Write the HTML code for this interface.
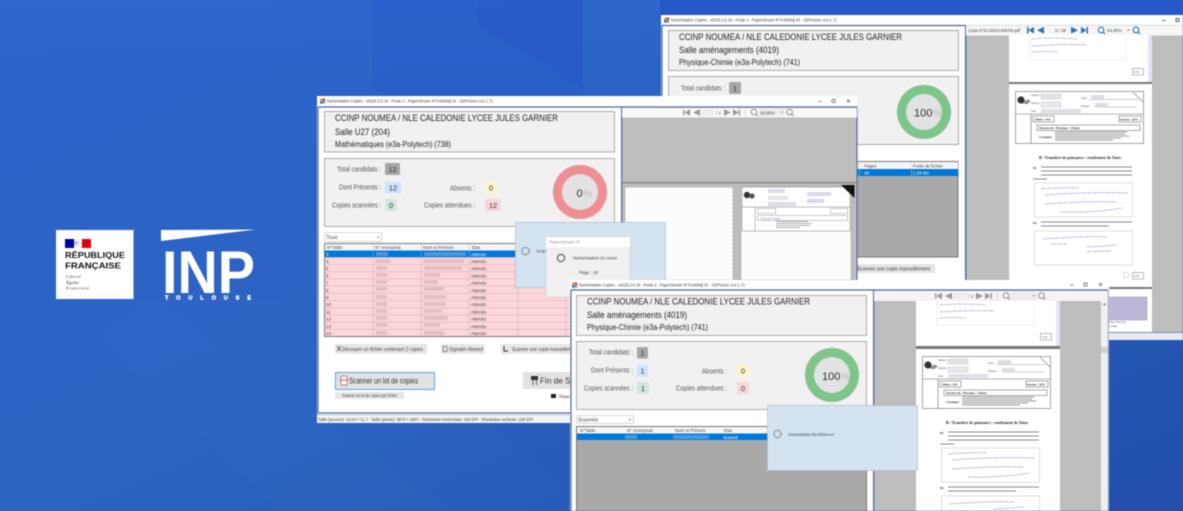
<!DOCTYPE html>
<html lang="fr"><head><meta charset="utf-8"><title>Numérisation Copies</title>
<style>
html,body{margin:0;padding:0;width:1183px;height:511px;overflow:hidden;background:#2b62c4}
svg{position:absolute;left:0;top:0;display:block}
#ui{filter:blur(.45px)}
text{font-family:"Liberation Sans",sans-serif;fill:#222}
.ti{font-size:4.6px;fill:#444}
.h1{font-size:9px;fill:#222}.h2{font-size:9px;fill:#222}.h3{font-size:8px;fill:#222}
.lb{font-size:7.2px;fill:#555;text-anchor:end}
.bd{font-size:7.5px;fill:#333;text-anchor:middle}
.sm{font-size:4.4px;fill:#444}
.btn{font-size:5px;fill:#444}
.doc{font-size:2.6px;fill:#555;font-family:"Liberation Serif",serif}
.dl{font-size:3px;fill:#333;font-family:"Liberation Serif",serif}
.hw{fill:none;stroke:#8a88d0;stroke-width:1;stroke-dasharray:3 .7 1.6 .8;opacity:.65}
</style></head><body>
<svg width="1183" height="511" viewBox="0 0 1183 511">
<defs>
<linearGradient id="bg" x1="0" y1="0" x2="1" y2="1"><stop offset="0" stop-color="#2c64cc"/><stop offset=".45" stop-color="#2c63c3"/><stop offset="1" stop-color="#214fab"/></linearGradient>
<linearGradient id="bg2" x1="0" y1="0" x2="0" y2="1"><stop offset="0" stop-color="#3d7ae0" stop-opacity=".14"/><stop offset=".5" stop-color="#2a60c0" stop-opacity="0"/></linearGradient>
</defs>
<rect width="1183" height="511" fill="url(#bg)"/>
<rect width="660" height="230" fill="url(#bg2)"/>
<polygon points="0,400 150,300 340,300 600,511 0,511" fill="#3a78cc" opacity=".1"/>
<polygon points="60,300 160,300 450,511 280,511" fill="#4182d0" opacity=".07"/>
<polygon points="372,0 583,0 583,88 480,150 372,88" fill="#2757c9" opacity=".4"/>
<polygon points="478,0 583,0 583,88 478,26" fill="#2350c6" opacity=".3"/>
<polygon points="660,0 1183,0 1183,18 660,18" fill="#2658c9"/>
</svg>

<svg id="ui" width="1183" height="511" viewBox="0 0 1183 511">
<defs>
<pattern id="grid" width="4" height="4" patternUnits="userSpaceOnUse"><rect width="4" height="4" fill="#fff"/><path d="M0 0H4M0 0V4" stroke="#e7e7e7" stroke-width=".6"/></pattern>
<g id="nav">
<rect x="0" y="-3" width="1.4" height="6" fill="#999"/><polygon points="7,-3.4 7,3.4 1.6,0" fill="#999"/>
<polygon points="17,-3.4 17,3.4 10,0" fill="#999"/>
<rect x="18" y="-3.6" width="13" height="7.2" fill="#eee"/>
<polygon points="41,-3.4 41,3.4 48,0" fill="#999"/>
<polygon points="50,-3.4 50,3.4 55.6,0" fill="#999"/><rect x="55.6" y="-3" width="1.4" height="6" fill="#999"/>
<rect x="62" y="-4" width=".7" height="8" fill="#ccc"/>
<circle cx="71" cy="-.5" r="2.8" fill="none" stroke="#999" stroke-width="1.1"/><path d="M73 1.6L75 3.6" stroke="#999" stroke-width="1.2"/>
<rect x="77" y="-3.4" width="24" height="6.8" fill="#eee" stroke="#ddd" stroke-width=".5"/><polygon points="97.5,-.7 100,-.7 98.7,.8" fill="#888"/>
<circle cx="106.5" cy="-.5" r="2.8" fill="none" stroke="#999" stroke-width="1.1"/><path d="M108.5 1.6L110.5 3.6" stroke="#999" stroke-width="1.2"/>
</g>
<g id="ctl" fill="none" stroke="#555" stroke-width=".7"><path d="M0 .5H3.5"/><rect x="14" y="-1.5" width="3" height="3"/><path d="M29 -1.5L32 1.5M32 -1.5L29 1.5"/></g>
<g id="spin" fill="none" stroke="#777" stroke-width="1.5"><circle r="3.6" stroke-dasharray="1.2 .9"/></g>
<g id="appicon"><rect x="0" y="0" width="2.6" height="2.6" fill="#e8a23a"/><rect x="2.6" y="0" width="2.6" height="2.6" fill="#c94a3f"/><rect x="0" y="2.6" width="2.6" height="2.6" fill="#3a6fc9"/><rect x="2.6" y="2.6" width="2.6" height="2.6" fill="#8a9ab8"/></g>
</defs>

<!-- LOGOS -->
<rect x="56" y="230" width="77.5" height="69" fill="#fff"/>
<rect x="65" y="239" width="9" height="9" fill="#000091"/><rect x="74" y="239" width="8" height="9" fill="#f2f2f5"/><rect x="82" y="239" width="9" height="9" fill="#e1000f"/>
<circle cx="76" cy="243" r="2" fill="#b8bcd8"/>
<text x="65" y="258" font-size="8.2" font-weight="700" textLength="60" lengthAdjust="spacingAndGlyphs" style="fill:#161616">RÉPUBLIQUE</text>
<text x="65" y="268.5" font-size="8.2" font-weight="700" textLength="56" lengthAdjust="spacingAndGlyphs" style="fill:#161616">FRANÇAISE</text>
<g font-style="italic" font-size="4.6">
<text x="66" y="278" style="font-family:'Liberation Serif',serif;fill:#333" textLength="15">Liberté</text>
<text x="66" y="284" style="font-family:'Liberation Serif',serif;fill:#333" textLength="13">Égalité</text>
<text x="66" y="289.5" style="font-family:'Liberation Serif',serif;fill:#333" textLength="23">Fraternité</text>
</g>
<polygon points="161,230 256,229.5 161,241" fill="#fff"/>
<text x="162" y="293" font-size="60" font-weight="700" textLength="93" lengthAdjust="spacingAndGlyphs" style="fill:#fff">INP</text>
<text x="165" y="299.5" font-size="5.6" font-weight="700" textLength="86" style="fill:#fff;stroke:#fff;stroke-width:.4">TOULOUSE</text>

<!-- BACK WINDOW -->
<rect x="661" y="15" width="522" height="318" fill="#fff"/>
<use href="#appicon" x="664" y="17.5"/>
<text class="ti" x="671" y="21.5" textLength="166" lengthAdjust="spacingAndGlyphs">Numérisation Copies - v2025.2.0.18 - Poste 2 - PaperStream IP fi-6400dj #2 - GDPicture v14.1.71</text>
<use href="#ctl" x="1162" y="20"/>
<rect x="661" y="25" width="304" height="308" fill="#fff"/>
<path d="M662 25V333M662 25.5H965" stroke="#4b6a9e" stroke-width="1.2" fill="none"/>
<rect x="668.5" y="30.5" width="290" height="40" fill="#f1f1f1" stroke="#aaa"/>
<text class="h1" x="679" y="40" textLength="223" lengthAdjust="spacingAndGlyphs">CCINP NOUMEA / NLE CALEDONIE LYCEE JULES GARNIER</text>
<text class="h2" x="679" y="53" textLength="100" lengthAdjust="spacingAndGlyphs">Salle aménagements (4019)</text>
<text class="h3" x="679" y="65" textLength="121" lengthAdjust="spacingAndGlyphs">Physique-Chimie (e3a-Polytech) (741)</text>
<rect x="668.5" y="76.5" width="290" height="68" fill="#f1f1f1" stroke="#aaa"/>
<text class="lb" x="725" y="90.5" textLength="44" lengthAdjust="spacingAndGlyphs">Total candidats :</text>
<rect x="729" y="82" width="12" height="12" rx="1.5" fill="#a6a6a6"/><text class="bd" x="735" y="91">1</text>
<circle cx="924" cy="112" r="27" fill="#7dc58a"/><circle cx="924" cy="112" r="18" fill="#e2e2e2"/>
<text x="914" y="116.5" font-size="11" style="fill:#333">100</text><text x="933" y="116.5" font-size="10" style="fill:#bbb">%</text>
<rect x="668" y="161.5" width="290" height="95.5" fill="#a9a9a9" stroke="#777"/>
<rect x="669" y="162" width="289" height="7" fill="#f5f5f5"/>
<text class="sm" x="864" y="167.5">Pages</text><text class="sm" x="913" y="167.5">Poids du fichier</text>
<rect x="669" y="169" width="289" height="7" fill="#0078d7"/>
<text class="sm" x="864" y="174.5" style="fill:#fff">28</text><text class="sm" x="913" y="174.5" style="fill:#fff">1,29 Mo</text>
<path d="M859.5 162V176M911.5 162V176" stroke="#ccc" stroke-width=".5"/>
<rect x="800" y="264" width="135" height="9" fill="#e4e4e4"/>
<text class="btn" x="857" y="270.5" textLength="73" lengthAdjust="spacingAndGlyphs">Scanner une copie manuellement</text>

<rect x="965" y="25" width="218" height="308" fill="#bdbdbd"/>
<rect x="965" y="25" width="1.4" height="308" fill="#4b6a9e"/>
<rect x="966" y="25.5" width="217" height="10" fill="#f6f6f6"/>
<text class="sm" x="968" y="32" textLength="52" lengthAdjust="spacingAndGlyphs">Copie-0741-00015-659794.pdf</text>
<g fill="#2f72ad">
<rect x="1027" y="27" width="1.6" height="6.4"/><polygon points="1034,26.8 1034,33.6 1028.6,30.2"/><polygon points="1044,26.8 1044,33.6 1037,30.2"/>
<polygon points="1071,26.8 1071,33.6 1078,30.2"/><polygon points="1081,26.8 1081,33.6 1086.4,30.2"/><rect x="1086.4" y="27" width="1.6" height="6.4"/>
</g>
<text class="sm" x="1055" y="32.2">5 / 28</text>
<circle cx="1101" cy="30" r="2.8" fill="none" stroke="#2f72ad" stroke-width="1.1"/><path d="M1103 32L1105 34" stroke="#2f72ad" stroke-width="1.2"/>
<text class="sm" x="1107" y="32">54,00%</text><polygon points="1127,29.6 1129.6,29.6 1128.3,31" fill="#555"/>
<circle cx="1136" cy="30" r="2.8" fill="none" stroke="#2f72ad" stroke-width="1.1"/><path d="M1138 32L1140 34" stroke="#2f72ad" stroke-width="1.2"/>
<use href="#ctl" x="1162" y="20"/>
<rect x="1009" y="35" width="143" height="47" fill="#fff"/><rect x="1148" y="35" width="4" height="47" fill="#e3e3f3"/>
<path d="M1030 35V60H1126V35" fill="none" stroke="#ddd" stroke-width=".6"/>
<path class="hw" d="M1032 39q20 -2 45 0M1032 46q30 -2 55 -1M1032 52q15 -1 26 0"/>
<rect x="1132.5" y="68.5" width="11" height="6.5" fill="#fff" stroke="#777" stroke-width=".5"/><text class="doc" x="1134" y="73" style="font-size:3px">4/20</text>
<rect x="1009" y="82" width="143" height="2" fill="#777"/>
<rect x="1009" y="287" width="143" height="2" fill="#777"/>
<rect x="1009" y="289" width="143" height="44" fill="#fff"/>
<rect x="1019" y="297" width="128" height="23" fill="#b9b6d8" stroke="#999" stroke-width=".5"/>
<text class="doc" x="1109" y="323">Etant donné que</text><text class="doc" x="1109" y="327">la figure</text>

<g transform="translate(1009,84)">
<rect width="143" height="203" fill="#fff"/>
<rect x="6.5" y="7.5" width="128" height="52" fill="#fff" stroke="#666" stroke-width=".6"/>
<path d="M6.5 30H134.5M22 30V59.5" stroke="#666" stroke-width=".6"/>
<circle cx="12" cy="16" r="3.6" fill="#333"/><text x="14" y="20" font-size="5" font-weight="700" style="fill:#333">NP</text>
<rect x="32" y="10" width="20" height="5" fill="#e2e2ea" stroke="#bbb" stroke-width=".4"/><rect x="32" y="18" width="20" height="5" fill="#e8e8ee" stroke="#bbb" stroke-width=".4"/><rect x="32" y="25" width="40" height="4" fill="#dfdfe8"/>
<text class="doc" x="22" y="12">Numéro</text><text class="doc" x="22" y="20">Numéro</text><text class="doc" x="22" y="28">Nom</text>
<text class="doc" x="72" y="15">Nom :</text><text class="doc" x="72" y="23">Prénom :</text>
<path d="M80 15.5H130M86 23H128" stroke="#888" stroke-width=".4"/><rect x="82" y="11" width="13" height="4" fill="#dcdce6"/><rect x="86" y="19" width="13" height="4" fill="#dcdce6"/>
<rect x="24" y="32" width="21" height="6" fill="#fff" stroke="#555" stroke-width=".5"/><text class="dl" x="26" y="36.5" font-weight="700">Filière : PSI</text>
<rect x="110" y="32" width="22" height="6" fill="#fff" stroke="#555" stroke-width=".5"/><text class="dl" x="111" y="36.5" font-weight="700">Session : 2025</text>
<rect x="28" y="41" width="103" height="5.5" fill="#fff" stroke="#555" stroke-width=".5"/><text class="dl" x="30" y="45" font-weight="700">Epreuve de : Physique - Chimie</text>
<text class="dl" x="30" y="54" font-weight="700">Consignes</text>
<path d="M46 48H118M46 50H116M46 52H120M46 54H112M46 56H104" stroke="#777" stroke-width=".7"/>
<path d="M124 8L134 18" stroke="#888" stroke-width=".8"/>
<text x="71" y="75" font-size="4.2" font-weight="700" text-anchor="middle" style="font-family:'Liberation Serif',serif;fill:#222" textLength="82" lengthAdjust="spacingAndGlyphs">B / Transfert de puissance : rendement de Yates</text>
<text class="dl" x="24" y="85" font-weight="700">B1.</text>
<path d="M32 83H123M32 87H123M32 91H123M24 95H38" stroke="#888" stroke-width=".9"/>
<rect x="25.5" y="99" width="98" height="34" fill="#fff" stroke="#c8c8c8" stroke-width=".6"/>
<path class="hw" d="M32 105q30 -2 38 -1M36 111q40 -3 82 -2M36 120q40 -3 72 -2M52 128q30 1 62 -4"/>
<text class="dl" x="24" y="140" font-weight="700">B2.</text>
<path d="M32 138H123M32 142H100" stroke="#888" stroke-width=".9"/>
<rect x="25.5" y="147" width="98" height="34" fill="#fff" stroke="#c8c8c8" stroke-width=".6"/>
<path class="hw" d="M34 155q40 -3 64 -2M42 160q10 0 16 0M78 163q20 -1 30 -2M78 168q14 -1 24 -1"/>
<circle cx="117" cy="191" r="2.8" fill="none" stroke="#aaa" stroke-width=".5"/>
<rect x="123.5" y="188.5" width="11" height="6.5" fill="#fff" stroke="#777" stroke-width=".5"/><text class="doc" x="125" y="193" style="font-size:3px">4/20</text>
</g>

<!-- MIDDLE WINDOW -->
<rect x="317" y="96" width="540" height="327" fill="#fff"/>
<use href="#appicon" x="320" y="98.5"/>
<text class="ti" x="327" y="102.5" textLength="166" lengthAdjust="spacingAndGlyphs">Numérisation Copies - v2025.2.0.18 - Poste 2 - PaperStream IP fi-6400dj #2 - GDPicture v14.1.71</text>
<use href="#ctl" x="818" y="101"/>
<path d="M318 107H857M857 107V423M318 107V413H621" stroke="#4b6a9e" stroke-width="1.2" fill="none"/>
<rect x="324.5" y="111.5" width="290" height="40.5" fill="#f1f1f1" stroke="#aaa"/>
<text class="h1" x="335" y="121" textLength="223" lengthAdjust="spacingAndGlyphs">CCINP NOUMEA / NLE CALEDONIE LYCEE JULES GARNIER</text>
<text class="h2" x="335" y="135" textLength="55" lengthAdjust="spacingAndGlyphs">Salle U27 (204)</text>
<text class="h3" x="335" y="147" textLength="116" lengthAdjust="spacingAndGlyphs">Mathématiques (e3a-Polytech) (738)</text>
<rect x="324.5" y="158.5" width="290" height="68" fill="#f1f1f1" stroke="#aaa"/>
<text class="lb" x="381" y="171.5" textLength="44" lengthAdjust="spacingAndGlyphs">Total candidats :</text>
<rect x="385" y="163" width="15" height="12" rx="1.5" fill="#a6a6a6"/><text class="bd" x="392.5" y="172">12</text>
<text class="lb" x="381" y="189.5" textLength="42" lengthAdjust="spacingAndGlyphs">Dont Présents :</text>
<rect x="385" y="182" width="16" height="11.5" rx="1.5" fill="#cfe2ff"/><text class="bd" x="393" y="190.5">12</text>
<text class="lb" x="381" y="207.5" textLength="49" lengthAdjust="spacingAndGlyphs">Copies scannées :</text>
<rect x="385" y="199" width="12" height="12" rx="1.5" fill="#d1e7dd"/><text class="bd" x="391" y="208">0</text>
<text class="lb" x="475" y="190.5" textLength="25" lengthAdjust="spacingAndGlyphs">Absents :</text>
<rect x="485" y="182" width="12" height="11.5" rx="1.5" fill="#fff3cd"/><text class="bd" x="491" y="190.5">0</text>
<text class="lb" x="475" y="207.5" textLength="51" lengthAdjust="spacingAndGlyphs">Copies attendues :</text>
<rect x="485" y="199" width="16" height="12" rx="1.5" fill="#f8d7da"/><text class="bd" x="493" y="208">12</text>
<circle cx="580" cy="192" r="27" fill="#ee8f93"/><circle cx="580" cy="192" r="18" fill="#e2e2e2"/>
<text x="576.5" y="197" font-size="11" style="fill:#333">0</text><text x="583" y="197" font-size="10" style="fill:#bbb">%</text>
<rect x="324.5" y="232.5" width="57" height="9" fill="#fff" stroke="#bbb" stroke-width=".6"/><text class="sm" x="326" y="239" style="font-size:5.4px">Tous</text><polygon points="377,236.5 379.4,236.5 378.2,238" fill="#666"/>
<rect x="324.5" y="243.5" width="296" height="93" fill="#fdd6da" stroke="#777"/>
<rect x="325" y="244" width="296" height="6.5" fill="#f5f5f5"/>
<text class="sm" x="327" y="249">N°Table</text><text class="sm" x="375" y="249">N° Anonymat</text><text class="sm" x="423" y="249">Nom et Prénom</text><text class="sm" x="472" y="249">Etat</text>
<rect x="325" y="250.5" width="296" height="6.8" fill="#0078d7"/>
<path d="M325 264.5H621M325 271.7H621M325 278.9H621M325 286.1H621M325 293.3H621M325 300.5H621M325 307.7H621M325 314.9H621M325 322.1H621M325 329.3H621" stroke="#c8aeb2" stroke-width=".5"/>
<path d="M373 244V336M421 244V336M469 244V336M518 257V336M566 257V336" stroke="#c8aeb2" stroke-width=".5"/>
<g fill="#e6bcc3">
<rect x="376" y="259" width="14" height="4" /><rect x="424" y="259" width="40" height="4"/>
<rect x="376" y="266" width="11" height="4"/><rect x="424" y="266" width="38" height="4"/>
<rect x="376" y="273" width="11" height="4"/><rect x="424" y="273" width="16" height="4"/>
<rect x="376" y="280" width="11" height="4"/><rect x="424" y="280" width="14" height="4"/>
<rect x="376" y="287" width="11" height="4"/><rect x="424" y="287" width="20" height="4"/>
<rect x="376" y="295" width="11" height="4"/><rect x="424" y="295" width="22" height="4"/>
<rect x="376" y="302" width="11" height="4"/><rect x="424" y="302" width="22" height="4"/>
<rect x="376" y="309" width="11" height="4"/><rect x="424" y="309" width="18" height="4"/>
<rect x="376" y="316" width="11" height="4"/><rect x="424" y="316" width="24" height="4"/>
<rect x="376" y="323" width="11" height="4"/><rect x="424" y="323" width="16" height="4"/>
<rect x="376" y="331" width="11" height="4"/><rect x="424" y="331" width="20" height="4"/>
</g>
<rect x="376" y="252" width="12" height="4" fill="#4c98de"/><rect x="424" y="252" width="42" height="4" fill="#4c98de"/>
<g>
<text class="sm" x="326" y="255.8" style="fill:#fff">3</text><text class="sm" x="471" y="255.8" style="fill:#fff">Attendu</text>
<text class="sm" x="326" y="263">4</text><text class="sm" x="471" y="263">Attendu</text>
<text class="sm" x="326" y="270.2">5</text><text class="sm" x="471" y="270.2">Attendu</text>
<text class="sm" x="326" y="277.4">6</text><text class="sm" x="471" y="277.4">Attendu</text>
<text class="sm" x="326" y="284.6">7</text><text class="sm" x="471" y="284.6">Attendu</text>
<text class="sm" x="326" y="291.8">8</text><text class="sm" x="471" y="291.8">Attendu</text>
<text class="sm" x="326" y="299">9</text><text class="sm" x="471" y="299">Attendu</text>
<text class="sm" x="326" y="306.2">10</text><text class="sm" x="471" y="306.2">Attendu</text>
<text class="sm" x="326" y="313.4">11</text><text class="sm" x="471" y="313.4">Attendu</text>
<text class="sm" x="326" y="320.6">12</text><text class="sm" x="471" y="320.6">Attendu</text>
<text class="sm" x="326" y="327.8">13</text><text class="sm" x="471" y="327.8">Attendu</text>
<text class="sm" x="326" y="335">14</text><text class="sm" x="471" y="335">Attendu</text>
</g>
<rect x="335" y="344" width="92" height="10" fill="#e6e6e6"/><text class="btn" x="342" y="350.8" textLength="81" lengthAdjust="spacingAndGlyphs">Découper un fichier contenant 2 copies</text>
<path d="M337 351L341 346M341 351L337 346" stroke="#444" stroke-width=".7"/>
<rect x="441" y="344" width="44" height="10" fill="#e6e6e6"/><text class="btn" x="449" y="350.8" textLength="34" lengthAdjust="spacingAndGlyphs">Signaler Absent</text>
<rect x="443" y="346.5" width="4" height="5" fill="none" stroke="#555" stroke-width=".6"/>
<rect x="501" y="344" width="80" height="10" fill="#e6e6e6"/><text class="btn" x="512" y="350.8" textLength="66" lengthAdjust="spacingAndGlyphs">Scanner une copie manuellement</text>
<path d="M504 346V351H508" stroke="#333" stroke-width="1" fill="none"/>
<rect x="335.5" y="372.5" width="99" height="17" fill="#e2e2e2" stroke="#5aa2e2"/>
<text x="349" y="383.5" font-size="8" textLength="69" lengthAdjust="spacingAndGlyphs" style="fill:#333">Scanner un lot de copies</text>
<rect x="341" y="376" width="6" height="9" fill="#fff" stroke="#a55" stroke-width=".7"/><path d="M340 380H348" stroke="#d33" stroke-width=".8"/>
<rect x="335" y="392" width="69" height="7" fill="#e6e6e6"/><text class="sm" x="342" y="397" textLength="55" lengthAdjust="spacingAndGlyphs">Scanner un lot de copies par fichier</text>
<rect x="523" y="372" width="60" height="17" fill="#e2e2e2"/>
<rect x="531" y="376" width="7" height="4" fill="#333"/><path d="M533 376V385M536.5 376V385" stroke="#333" stroke-width=".7"/>
<text x="540" y="383.5" font-size="8.2" style="fill:#333">Fin de Salle</text>
<rect x="551" y="394" width="5" height="4" fill="#222"/><text class="sm" x="559" y="398">Répertoire</text>
<rect x="317" y="415" width="540" height="8" fill="#f3f3f3"/><rect x="317" y="414.5" width="540" height=".6" fill="#aab"/>
<text class="sm" x="318" y="421" textLength="215" lengthAdjust="spacingAndGlyphs">Taille (pouces): 16,54 × 11,7  -  Taille (pixels): 3970 × 2807  -  Résolution horizontale: 240 DPI  -  Résolution verticale: 240 DPI</text>

<rect x="621" y="107.5" width="235.5" height="172.5" fill="#bdbdbd"/>
<rect x="621" y="107" width="1.2" height="316" fill="#4b6a9e"/>
<rect x="622" y="108" width="235" height="9.5" fill="#f8f8f8"/>
<use href="#nav" x="683" y="112.5"/>
<text class="sm" x="716" y="114.5">/ 1</text><text class="sm" x="760" y="114.5">43,85%</text>
<rect x="622" y="182" width="235" height="1.5" fill="#888"/>
<rect x="625" y="187" width="108" height="93" fill="url(#grid)" stroke="#aaa" stroke-width=".6"/>
<rect x="741" y="187" width="110" height="93" fill="url(#grid)" stroke="#aaa" stroke-width=".6"/>
<rect x="742" y="187" width="108" height="44" fill="#fff" stroke="#777" stroke-width=".5"/>
<path d="M742 207H850M755 207V231" stroke="#777" stroke-width=".5"/>
<circle cx="747" cy="195" r="3.2" fill="#333"/><circle cx="752" cy="196" r="2.6" fill="#555"/>
<rect x="768" y="189" width="17" height="4" fill="#dcdce8"/><rect x="768" y="196" width="20" height="4" fill="#e4e4ea"/><rect x="768" y="202" width="28" height="4" fill="#dcdce8"/>
<rect x="807" y="192" width="24" height="4" fill="#d8d8f2"/><rect x="807" y="199" width="17" height="4" fill="#d8d8f2"/>
<rect x="757.5" y="208.5" width="18" height="5" fill="#fff" stroke="#777" stroke-width=".4"/><rect x="830.5" y="208.5" width="17" height="5" fill="#fff" stroke="#777" stroke-width=".4"/>
<rect x="757.5" y="215.5" width="90" height="5" fill="#fff" stroke="#777" stroke-width=".4"/>
<text class="doc" x="761" y="219.5" style="fill:#77c">Physique - Chimie</text>
<path d="M776 221.5H808M776 223.5H812M776 225.5H810M776 227.5H800" stroke="#666" stroke-width=".6"/>
<polygon points="841,185 854.5,185 854.5,198" fill="#111"/>

<!-- acquisition dialog -->
<rect x="515.5" y="222.5" width="150" height="65" fill="#d5e3f1" stroke="#a9bccd" stroke-width=".7"/>
<use href="#spin" x="525.5" y="251"/>
<text class="sm" x="536" y="252.5">Acquisition</text>
<rect x="546" y="237" width="84" height="60" fill="#f0f0f0" stroke="#ccc" stroke-width=".5"/>
<rect x="546" y="237" width="84" height="10" fill="#fff"/>
<text class="sm" x="549" y="243.5" style="fill:#999">PaperStream IP</text>
<circle cx="561" cy="258" r="3.6" fill="none" stroke="#666" stroke-width="1.2"/>
<text class="sm" x="573" y="259.5" textLength="44" lengthAdjust="spacingAndGlyphs">Numérisation en cours</text>
<text class="sm" x="579" y="274">Page : 18</text>

<!-- FRONT WINDOW -->
<rect x="570" y="280" width="539" height="231" fill="#fff"/>
<use href="#appicon" x="572" y="282.5"/>
<text class="ti" x="579" y="286.5" textLength="166" lengthAdjust="spacingAndGlyphs">Numérisation Copies - v2025.2.0.18 - Poste 2 - PaperStream IP fi-6400dj #2 - GDPicture v14.1.71</text>
<use href="#ctl" x="1070" y="284.5"/>
<path d="M571 290H1108M1108 290V511M571 290V511" stroke="#4b6a9e" stroke-width="1.2" fill="none"/>
<rect x="576.5" y="295.5" width="290" height="40" fill="#f1f1f1" stroke="#aaa"/>
<text class="h1" x="587" y="304.5" textLength="223" lengthAdjust="spacingAndGlyphs">CCINP NOUMEA / NLE CALEDONIE LYCEE JULES GARNIER</text>
<text class="h2" x="587" y="318" textLength="100" lengthAdjust="spacingAndGlyphs">Salle aménagements (4019)</text>
<text class="h3" x="587" y="330" textLength="121" lengthAdjust="spacingAndGlyphs">Physique-Chimie (e3a-Polytech) (741)</text>
<rect x="576.5" y="341.5" width="290" height="68" fill="#f1f1f1" stroke="#aaa"/>
<text class="lb" x="633" y="354.5" textLength="44" lengthAdjust="spacingAndGlyphs">Total candidats :</text>
<rect x="637" y="347" width="11" height="11.5" rx="1.5" fill="#a6a6a6"/><text class="bd" x="642.5" y="355.5">1</text>
<text class="lb" x="633" y="372.5" textLength="42" lengthAdjust="spacingAndGlyphs">Dont Présents :</text>
<rect x="637" y="365" width="11" height="11.5" rx="1.5" fill="#cfe2ff"/><text class="bd" x="642.5" y="373.5">1</text>
<text class="lb" x="633" y="390.5" textLength="49" lengthAdjust="spacingAndGlyphs">Copies scannées :</text>
<rect x="637" y="382" width="12" height="12" rx="1.5" fill="#d1e7dd"/><text class="bd" x="643" y="391">1</text>
<text class="lb" x="727" y="373.5" textLength="25" lengthAdjust="spacingAndGlyphs">Absents :</text>
<rect x="737" y="365" width="12" height="11.5" rx="1.5" fill="#fff3cd"/><text class="bd" x="743" y="373.5">0</text>
<text class="lb" x="727" y="390.5" textLength="51" lengthAdjust="spacingAndGlyphs">Copies attendues :</text>
<rect x="737" y="382" width="12" height="12" rx="1.5" fill="#f8d7da"/><text class="bd" x="743" y="391">0</text>
<circle cx="832" cy="375" r="27" fill="#7dc58a" stroke="#d8c8b8" stroke-width=".6"/><circle cx="832" cy="375" r="18" fill="#e2e2e2"/>
<text x="822" y="380" font-size="11" style="fill:#333">100</text><text x="841" y="380" font-size="10" style="fill:#bbb">%</text>
<rect x="576.5" y="415.5" width="57" height="8" fill="#fff" stroke="#bbb" stroke-width=".6"/><text class="sm" x="578" y="421.5" style="font-size:5.2px">Scannés</text><polygon points="628.5,419 631,419 629.7,420.5" fill="#666"/>
<rect x="576.5" y="426.5" width="290" height="85" fill="#a9a9a9" stroke="#777"/>
<rect x="577" y="427" width="289" height="6.5" fill="#f5f5f5"/>
<text class="sm" x="580" y="432">N°Table</text><text class="sm" x="627" y="432">N° Anonymat</text><text class="sm" x="675" y="432">Nom et Prénom</text><text class="sm" x="724" y="432">Etat</text>
<rect x="577" y="433.5" width="289" height="6.5" fill="#0078d7"/>
<rect x="625" y="435" width="12" height="4" fill="#4c98de"/><rect x="673" y="435" width="36" height="4" fill="#4c98de"/>
<text class="sm" x="723" y="438.8" style="fill:#fff">Scanné</text>

<rect x="873" y="290.5" width="235" height="220.5" fill="#bdbdbd"/>
<rect x="873" y="290" width="1.3" height="221" fill="#4b6a9e"/>
<rect x="874" y="291" width="234" height="10" fill="#f4f4f4"/>
<use href="#nav" x="935" y="296"/>
<text class="sm" x="968" y="298" style="fill:#777">/ X</text>
<rect x="1101" y="301" width="7" height="210" fill="#f0f0f0"/><rect x="1101" y="347" width="7" height="6" fill="#cfcfcf"/>
<polygon points="1104.5,303 1106,305 1103,305" fill="#666"/>
<rect x="916" y="301" width="144" height="45" fill="#fff"/><rect x="1056" y="301" width="4" height="45" fill="#e3e3f3"/>
<path d="M937 301V325H1034V301" fill="none" stroke="#ddd" stroke-width=".6"/>
<path class="hw" d="M940 305q20 -2 45 0M940 312q30 -2 55 -1M940 318q15 -1 26 0"/>
<rect x="1040.5" y="333.5" width="11" height="6.5" fill="#fff" stroke="#777" stroke-width=".5"/><text class="doc" x="1042" y="338" style="font-size:3px">4/20</text>
<rect x="916" y="346" width="144" height="3" fill="#777"/>

<g transform="translate(916,349)">
<rect width="144" height="162" fill="#fff"/>
<rect x="6.5" y="7.5" width="128" height="52" fill="#fff" stroke="#666" stroke-width=".6"/>
<path d="M6.5 30H134.5M22 30V59.5" stroke="#666" stroke-width=".6"/>
<circle cx="12" cy="16" r="3.6" fill="#333"/><text x="14" y="20" font-size="5" font-weight="700" style="fill:#333">NP</text>
<rect x="32" y="10" width="20" height="5" fill="#e2e2ea" stroke="#bbb" stroke-width=".4"/><rect x="32" y="18" width="20" height="5" fill="#e8e8ee" stroke="#bbb" stroke-width=".4"/><rect x="32" y="25" width="40" height="4" fill="#dfdfe8"/>
<text class="doc" x="22" y="12">Numéro</text><text class="doc" x="22" y="20">Numéro</text><text class="doc" x="22" y="28">Nom</text>
<text class="doc" x="72" y="15">Nom :</text><text class="doc" x="72" y="23">Prénom :</text>
<path d="M80 15.5H130M86 23H128" stroke="#888" stroke-width=".4"/><rect x="82" y="11" width="13" height="4" fill="#dcdce6"/><rect x="86" y="19" width="13" height="4" fill="#dcdce6"/>
<rect x="24" y="32" width="21" height="6" fill="#fff" stroke="#555" stroke-width=".5"/><text class="dl" x="26" y="36.5" font-weight="700">Filière : PSI</text>
<rect x="110" y="32" width="22" height="6" fill="#fff" stroke="#555" stroke-width=".5"/><text class="dl" x="111" y="36.5" font-weight="700">Session : 2025</text>
<rect x="28" y="41" width="103" height="5.5" fill="#fff" stroke="#555" stroke-width=".5"/><text class="dl" x="30" y="45" font-weight="700">Epreuve de : Physique - Chimie</text>
<text class="dl" x="30" y="54" font-weight="700">Consignes</text>
<path d="M46 48H118M46 50H116M46 52H120M46 54H112M46 56H104" stroke="#777" stroke-width=".7"/>
<path d="M124 8L134 18" stroke="#888" stroke-width=".8"/>
<text x="71" y="75" font-size="4.2" font-weight="700" text-anchor="middle" style="font-family:'Liberation Serif',serif;fill:#222" textLength="82" lengthAdjust="spacingAndGlyphs">B / Transfert de puissance : rendement de Yates</text>
<text class="dl" x="24" y="85" font-weight="700">B1.</text>
<path d="M32 83H123M32 87H123M32 91H123M24 95H38" stroke="#888" stroke-width=".9"/>
<rect x="25.5" y="99" width="98" height="34" fill="#fff" stroke="#c8c8c8" stroke-width=".6"/>
<path class="hw" d="M32 105q30 -2 38 -1M36 111q40 -3 82 -2M36 120q40 -3 72 -2M52 128q30 1 62 -4"/>
<text class="dl" x="24" y="140" font-weight="700">B2.</text>
<path d="M32 138H123M32 142H100" stroke="#888" stroke-width=".9"/>
<rect x="25.5" y="147" width="98" height="15" fill="#fff" stroke="#c8c8c8" stroke-width=".6"/>
<path class="hw" d="M34 155q40 -3 64 -2M78 160q20 -1 30 -2"/>
</g>

<!-- anonymisation dialog -->
<rect x="767.5" y="405.5" width="150" height="65" fill="#d5e3f1" stroke="#a9bccd" stroke-width=".7"/>
<use href="#spin" x="777.5" y="434"/>
<text class="sm" x="788" y="436" textLength="46" lengthAdjust="spacingAndGlyphs">Anonymisation des fichiers en</text>

<!-- back-window bottom strip -->
<rect x="1109" y="332" width="74" height="1.2" fill="#7a8fb8"/>
<rect x="1109" y="333" width="74" height="7" fill="#e8eaf0"/>
</svg>
</body></html>
